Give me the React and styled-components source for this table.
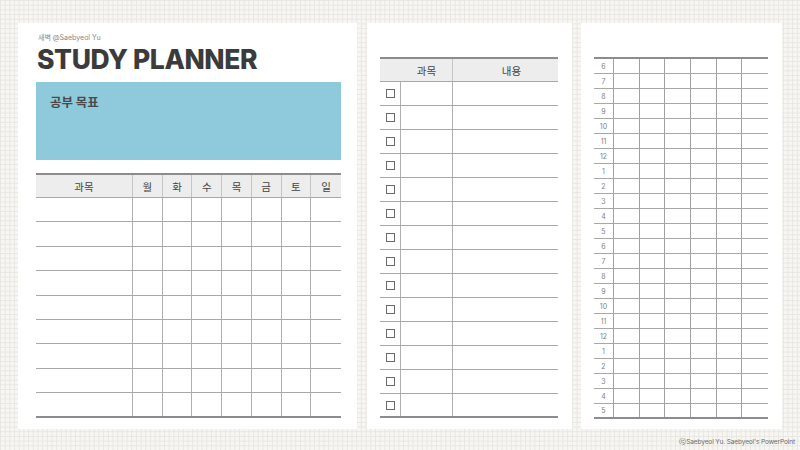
import React from 'react';
import styled, { createGlobalStyle } from 'styled-components';

const GlobalStyle = createGlobalStyle`
  * { box-sizing: border-box; }
  body {
    margin: 0;
    font-family: 'Inter', 'Noto Sans CJK KR', sans-serif;
  }
`;

const DAYS = ['월', '화', '수', '목', '금', '토', '일'];
const HOURS = [6, 7, 8, 9, 10, 11, 12, 1, 2, 3, 4, 5, 6, 7, 8, 9, 10, 11, 12, 1, 2, 3, 4, 5];

const App = () => {
  return (
    <>
      <GlobalStyle />
      <Page>
        <Panels>
          <Panel width={339} pad='10px 16px 0 18px'>
            <Credit>새벽 @Saebyeol Yu</Credit>
            <Title>STUDY PLANNER</Title>
            <GoalBox>
              <GoalTitle>공부 목표</GoalTitle>
            </GoalBox>
            <WeekTable>
              <HeadRow cols='97px repeat(7, 1fr)' h={25}>
                <HeadCell>과목</HeadCell>
                {DAYS.map((d) => (
                  <HeadCell key={d}>{d}</HeadCell>
                ))}
              </HeadRow>
              {Array.from({ length: 9 }).map((_, i) => (
                <BodyRow key={i} cols='97px repeat(7, 1fr)' h={24.4} last={i === 8}>
                  {Array.from({ length: 8 }).map((__, j) => (
                    <Cell key={j} />
                  ))}
                </BodyRow>
              ))}
            </WeekTable>
          </Panel>

          <Panel width={205} pad='34px 14px 0 13px'>
            <HeadRow cols='21px 52px 1fr' h={25}>
              <HeadCell blank />
              <HeadCell>과목</HeadCell>
              <HeadCell shift={6}>내용</HeadCell>
            </HeadRow>
            {Array.from({ length: 14 }).map((_, i) => (
              <BodyRow key={i} cols='21px 52px 1fr' h={24} last={i === 13}>
                <Cell center>
                  <CheckBox />
                </Cell>
                <Cell />
                <Cell />
              </BodyRow>
            ))}
          </Panel>

          <Panel width={201} pad='34px 14px 0 13px'>
            <TimeTop />
            {HOURS.map((h, i) => (
              <BodyRow key={i} cols='20px repeat(6, 1fr)' h={15} last={i === HOURS.length - 1}>
                <HourCell>{h}</HourCell>
                {Array.from({ length: 6 }).map((__, j) => (
                  <Cell key={j} dark />
                ))}
              </BodyRow>
            ))}
          </Panel>
        </Panels>
        <Footer>ⓒSaebyeol Yu. Saebyeol's PowerPoint</Footer>
      </Page>
    </>
  );
};

const Page = styled.div`
  width: 800px;
  height: 450px;
  overflow: hidden;
  background-color: #f7f6f3;
  background-image: linear-gradient(#e8e6e1 1px, transparent 1px),
    linear-gradient(90deg, #e8e6e1 1px, transparent 1px);
  background-size: 4.7px 4.7px;
  padding: 23px 0 0 18px;
`;

const Panels = styled.div`
  display: flex;
  gap: 10px;
  height: 406px;

  & > div:last-child {
    margin-left: -1px;
  }
`;

const Panel = styled.div`
  width: ${(p) => p.width}px;
  height: 100%;
  background: #ffffff;
  padding: ${(p) => p.pad};
  display: flex;
  flex-direction: column;
`;

const Credit = styled.div`
  font-size: 7px;
  line-height: 9px;
  color: #888888;
  margin-left: 2px;
`;

const Title = styled.h1`
  margin: 1px 0 0 1px;
  font-family: 'Inter', sans-serif;
  font-size: 26.5px;
  line-height: 32px;
  font-weight: 800;
  color: #3b3b3b;
  letter-spacing: -0.4px;
`;

const GoalBox = styled.div`
  margin-top: 7px;
  height: 78px;
  background: #8ecadc;
  padding: 12px 14px;
`;

const GoalTitle = styled.div`
  font-family: 'Noto Sans CJK KR', sans-serif;
  font-size: 12.5px;
  font-weight: 700;
  color: #4a4a4a;
  line-height: 16px;
`;

const WeekTable = styled.div`
  margin-top: 13px;
`;

const HeadRow = styled.div`
  display: grid;
  grid-template-columns: ${(p) => p.cols};
  height: ${(p) => p.h}px;
  background: #ededed;
  border-top: 2px solid #8c8c8c;
  border-bottom: 1px solid #a8a8a8;
`;

const HeadCell = styled.div`
  display: flex;
  align-items: center;
  justify-content: center;
  padding-left: ${(p) => (p.shift || 0) * 2}px;
  font-family: 'Noto Sans CJK KR', sans-serif;
  font-size: 10.5px;
  color: #444444;
  border-right: ${(p) => (p.blank ? 'none' : '1px solid #c4c4c4')};

  &:last-child {
    border-right: none;
  }
`;

const BodyRow = styled.div`
  display: grid;
  grid-template-columns: ${(p) => p.cols};
  height: ${(p) => p.h}px;
  border-bottom: ${(p) => (p.last ? '2px solid #8c8c8c' : '1px solid #a8a8a8')};
`;

const Cell = styled.div`
  display: flex;
  align-items: center;
  justify-content: ${(p) => (p.center ? 'center' : 'flex-start')};
  border-right: 1px solid ${(p) => (p.dark ? '#a0a0a0' : '#b0b0b0')};

  &:last-child {
    border-right: none;
  }
`;

const CheckBox = styled.span`
  width: 9px;
  height: 9px;
  border: 1.5px solid #6a6a6a;
  margin-left: 1px;
`;

const TimeTop = styled.div`
  height: 2px;
  background: #8c8c8c;
`;

const HourCell = styled.div`
  display: flex;
  align-items: center;
  justify-content: center;
  font-family: 'Inter', sans-serif;
  font-size: 7px;
  color: #808080;
  border-right: 1px solid #a0a0a0;
`;

const Footer = styled.div`
  text-align: right;
  padding-right: 5px;
  margin-top: 9px;
  font-family: 'Inter', sans-serif;
  font-size: 6.5px;
  color: #6a6a6a;
  letter-spacing: -0.1px;
`;

export default App;
